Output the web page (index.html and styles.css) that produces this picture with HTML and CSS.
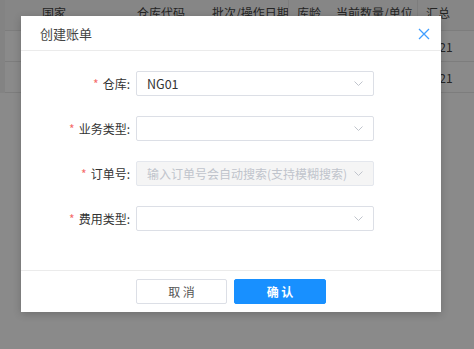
FILE: index.html
```html
<!DOCTYPE html>
<html lang="en">
<head>
    <title>创建账单</title>
    <link rel="stylesheet" href="styles.css">
</head>
<body>
    <div class="table">
        <div class="row head">
            <div class="cell c1">国家</div>
            <div class="cell c2">仓库代码</div>
            <div class="cell c3">批次/操作日期</div>
            <div class="cell c4">库龄</div>
            <div class="cell c5">当前数量/单位</div>
            <div class="cell c6">汇总</div>
        </div>
        <div class="row">
            <div class="cell c1"></div><div class="cell c2"></div><div class="cell c3"></div>
            <div class="cell c4"></div><div class="cell c5"></div><div class="cell c6">2021</div>
        </div>
        <div class="row">
            <div class="cell c1"></div><div class="cell c2"></div><div class="cell c3"></div>
            <div class="cell c4"></div><div class="cell c5"></div><div class="cell c6">2021</div>
        </div>
    </div>

    <div class="mask"></div>

    <div class="dialog">
        <div class="dialog-header">
            <span class="dialog-title">创建账单</span>
            <span class="dialog-close">
                <svg width="12" height="12" viewBox="0 0 12 12"><path d="M1 1 L11 11 M11 1 L1 11" stroke="#409eff" stroke-width="1.3" fill="none"/></svg>
            </span>
        </div>
        <div class="dialog-body">
            <div class="form-item">
                <label class="form-label"><span class="req">*</span>仓库:</label>
                <div class="select">
                    <span class="value">NG01</span>
                    <svg class="arrow" width="9" height="5" viewBox="0 0 9 5"><path d="M0.5 0.5 L4.5 4.5 L8.5 0.5" stroke="#c0c4cc" stroke-width="1" fill="none"/></svg>
                </div>
            </div>
            <div class="form-item">
                <label class="form-label"><span class="req">*</span>业务类型:</label>
                <div class="select">
                    <span class="value"></span>
                    <svg class="arrow" width="9" height="5" viewBox="0 0 9 5"><path d="M0.5 0.5 L4.5 4.5 L8.5 0.5" stroke="#c0c4cc" stroke-width="1" fill="none"/></svg>
                </div>
            </div>
            <div class="form-item">
                <label class="form-label"><span class="req">*</span>订单号:</label>
                <div class="select disabled">
                    <span class="value placeholder">输入订单号会自动搜索(支持模糊搜索)</span>
                    <svg class="arrow" width="9" height="5" viewBox="0 0 9 5"><path d="M0.5 0.5 L4.5 4.5 L8.5 0.5" stroke="#c0c4cc" stroke-width="1" fill="none"/></svg>
                </div>
            </div>
            <div class="form-item">
                <label class="form-label"><span class="req">*</span>费用类型:</label>
                <div class="select">
                    <span class="value"></span>
                    <svg class="arrow" width="9" height="5" viewBox="0 0 9 5"><path d="M0.5 0.5 L4.5 4.5 L8.5 0.5" stroke="#c0c4cc" stroke-width="1" fill="none"/></svg>
                </div>
            </div>
        </div>
        <div class="dialog-footer">
            <button class="btn">取 消</button>
            <button class="btn primary">确 认</button>
        </div>
    </div>
</body>
</html>
```

FILE: styles.css
```css
body {
    margin: 0;
    font-family: "Noto Sans CJK SC", "Noto Sans", sans-serif;
    font-size: 12px;
    color: #333;
    background-color: #fff;
    width: 474px;
    height: 349px;
    overflow: hidden;
    position: relative;
}

.table {
    border-left: 5px solid #f2f2f2;
}

.row {
    display: flex;
    height: 30px;
    border-bottom: 1px solid #e8e8e8;
}

.row.head {
    background-color: #f7f7f7;
}

.cell {
    padding-left: 8px;
    line-height: 26px;
    white-space: nowrap;
    overflow: hidden;
    box-sizing: border-box;
    color: #444;
}

.row:not(.head) .cell {
    line-height: 32px;
}

.c1 { width: 124px; padding-left: 37px; }
.c2 { width: 75px; }
.c3 { width: 85px; border-right: 1px solid #e8e8e8; }
.c4 { width: 39px; }
.c5 { width: 90px; border-right: 1px solid #e8e8e8; }
.c6 { flex: 1; }

.mask {
    position: absolute;
    left: 0;
    top: 0;
    right: 0;
    bottom: 0;
    background-color: rgba(0, 0, 0, 0.46);
}

.dialog {
    position: absolute;
    left: 21px;
    top: 16px;
    width: 420px;
    background-color: #fff;
    box-shadow: 0 2px 8px rgba(0, 0, 0, 0.2);
}

.dialog-header {
    display: flex;
    align-items: center;
    justify-content: space-between;
    height: 34px;
    padding: 0 11px 0 19px;
    border-bottom: 1px solid #ebebeb;
}

.dialog-title {
    font-size: 13px;
    color: #444;
}

.dialog-close {
    display: flex;
    margin-top: 1px;
}

.dialog-body {
    padding: 20px 0 39px;
    display: flex;
    flex-direction: column;
    gap: 20px;
}

.form-item {
    display: flex;
    align-items: center;
    height: 25px;
}

.form-label {
    width: 109px;
    padding-right: 6px;
    text-align: right;
    box-sizing: content-box;
    color: #333;
}

.req {
    color: #f56c6c;
    margin-right: 4px;
}

.select {
    width: 238px;
    height: 25px;
    box-sizing: border-box;
    border: 1px solid #dcdfe6;
    border-radius: 2px;
    display: flex;
    align-items: center;
    justify-content: space-between;
    padding: 0 10px 0 10px;
}

.select .value {
    font-size: 12.5px;
    color: #333;
    white-space: nowrap;
    overflow: hidden;
}

.select .arrow {
    flex-shrink: 0;
}

.select.disabled {
    background-color: #f5f5f5;
    border-color: #e4e7ed;
}

.select .placeholder {
    color: #c0c4cc;
    font-size: 12px;
}

.dialog-footer {
    border-top: 1px solid #ebebeb;
    display: flex;
    justify-content: center;
    gap: 7px;
    padding: 8px 0 8px;
}

.btn {
    width: 91px;
    height: 25px;
    border: 1px solid #dcdfe6;
    border-radius: 2px;
    background-color: #fff;
    color: #555;
    font-family: inherit;
    font-size: 12px;
    cursor: pointer;
    padding: 0;
}

.btn.primary {
    width: 92px;
    background-color: #1890ff;
    border-color: #1890ff;
    color: #fff;
    font-weight: bold;
}
```
